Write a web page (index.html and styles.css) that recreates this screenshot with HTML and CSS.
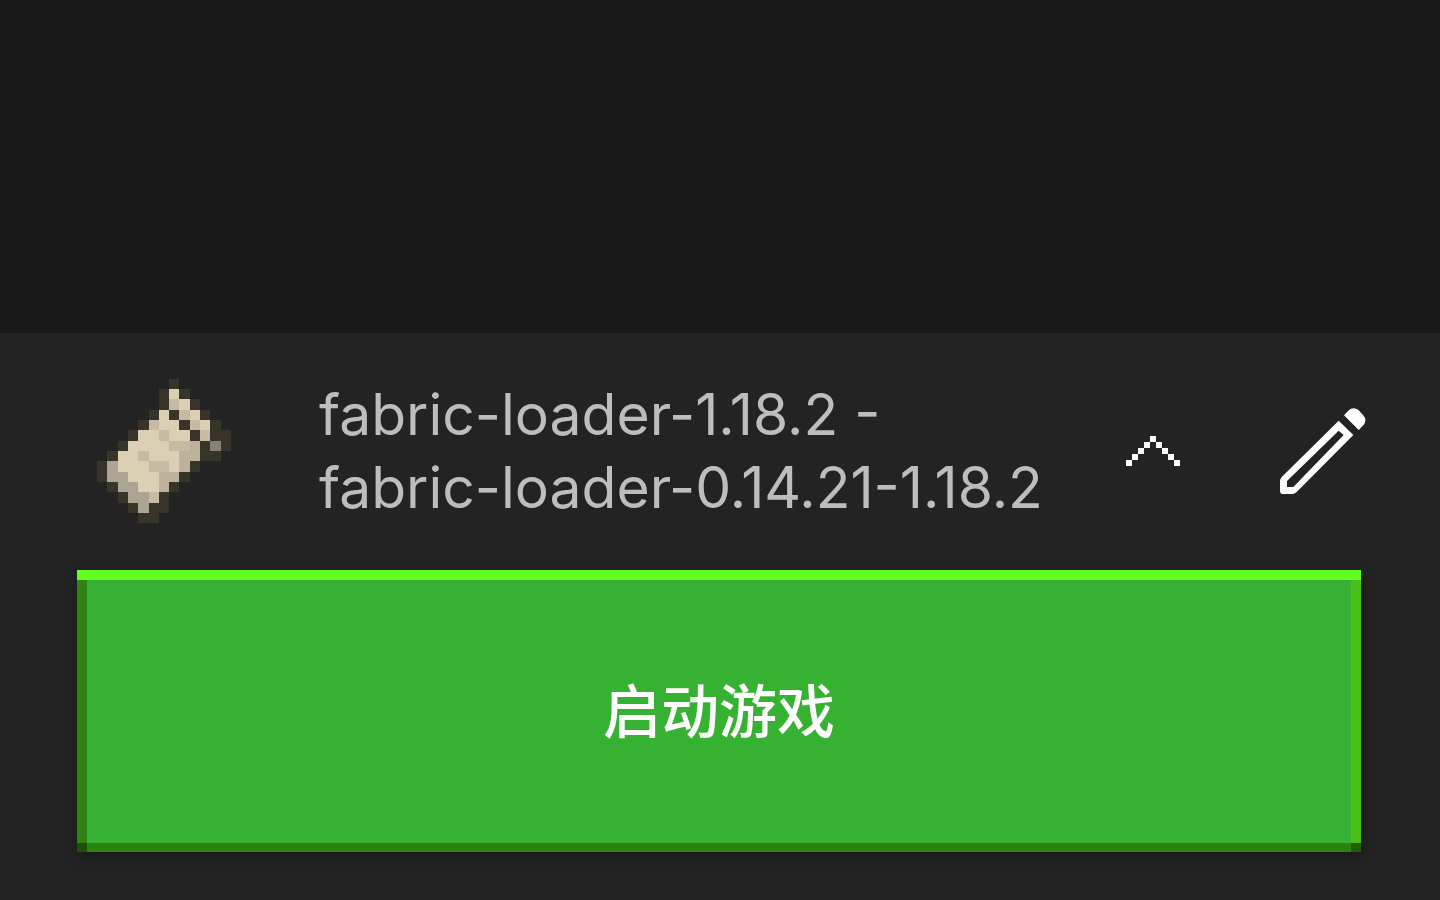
FILE: index.html
```html
<!DOCTYPE html>
<html lang="zh-CN">
<head>
    <meta charset="UTF-8">
    <meta name="viewport" content="width=device-width, initial-scale=1.0">
    <title>启动游戏</title>
    <link rel="stylesheet" href="styles.css">
</head>
<body>
    <main class="content"></main>

    <footer class="launch-panel">
        <div class="version-row">
            <!-- pixel icon, one unit per pixel -->
            <svg class="version-icon" viewBox="0 0 13 14" shape-rendering="crispEdges" aria-hidden="true">
                <path fill="#39342a" d="M7 0H8V1H9V2H10V3H11V4H12V5H13V7H12V8H10V9H9V10H8V11H7V13H6V14H4V13H3V12H2V11H1V10H0V8H1V7H2V6H3V5H4V4H5V3H6V1H7Z"/>
                <path fill="#dbd0b4" d="M7 1H8V2H9V3H10V4H11V6H10V8H9V9H8V10H7V11H6V12H5V13H4V12H3V11H2V10H1V8H2V7H3V6H4V5H5V4H6V3H7Z"/>
                <path fill="#39342a" d="M7 3h1v1h-1zM8 4h1v1h-1zM9 5h1v1h-1z"/>
                <path fill="#c6baa2" d="M7 2h1v1h-1zM8 3h1v1h-1zM5 4h1v1h-1zM9 4h1v1h-1zM6 5h1v1h-1zM10 5h1v1h-1zM7 6h2v1h-2zM4 7h1v1h-1zM5 8h2v1h-2zM5 11h1v1h-1z"/>
                <path fill="#bdb29c" d="M9 6h1v2h-2v-1h1zM8 8h1v1h-1zM6 9h2v1h-1v1h-1z"/>
                <path fill="#aca493" d="M1 8h1v1h1v1h1v1h1v2h-1v-1h-1v-1h-1v-1h-1z"/>
                <path fill="#89816f" d="M11 6h1v1h-1z"/>
            </svg>
            <p class="version-name">fabric-loader-1.18.2 -<br>fabric-loader-0.14.21-1.18.2</p>
            <button class="icon-btn" type="button" aria-label="选择版本">
                <svg class="arrow-icon" viewBox="0 0 9 5" shape-rendering="crispEdges">
                    <path fill="#fff" d="M4 0h1v1h-1zM3 1h1v1h-1zM5 1h1v1h-1zM2 2h1v1h-1zM6 2h1v1h-1zM1 3h1v1h-1zM7 3h1v1h-1zM0 4h1v1h-1zM8 4h1v1h-1z"/>
                </svg>
            </button>
            <button class="icon-btn" type="button" aria-label="编辑">
                <svg class="edit-icon" viewBox="0 0 258 258">
                    <path fill="#fff" fill-rule="evenodd" d="M176 38L220 81L50 252Q44 258 37 258H10Q0 258 0 248V219Q0 212 6 206ZM176 68L21 219V237H40L191 81Z"/>
                    <path fill="#fff" d="M192 22L205 8Q220 -6 236 7L249 21Q263 36 250 52L236 66Z"/>
                </svg>
            </button>
        </div>
        <button class="launch-btn" type="button">启动游戏</button>
    </footer>
</body>
</html>
```
FILE: styles.css
```css
*{
    margin: 0px;
    padding: 0px;
    box-sizing: border-box;
}
body{
    display: flex;
    flex-direction: column;
    min-height: 100vh;
    background-color: #191919;
    font-family: "Inter", "Noto Sans CJK SC", sans-serif;
}
.content{
    flex: 1;
}
.launch-panel{
    padding: 45px 79px 48px 77px;
    background-color: #232323;
}
.version-row{
    display: flex;
    align-items: center;
    padding-left: 20px;
    margin-bottom: 46px;
}
.version-icon{
    width: 134px;
    height: 146px;
    flex-shrink: 0;
}
.version-name{
    flex: 1;
    margin: 0px 48px 0px 88px;
    color: #bdbdbd;
    font-size: 57px;
    line-height: 73px;
    white-space: nowrap;
}
.icon-btn{
    display: flex;
    border: none;
    background: none;
    cursor: pointer;
}
.arrow-icon{
    width: 55px;
    height: 30px;
}
.edit-icon{
    width: 86px;
    height: 86px;
    margin: 0px -5px 0px 100px;
}
/* green button with bevel edges */
.launch-btn{
    display: block;
    width: 100%;
    padding: 93px 0px 99px;
    border: none;
    background:
        linear-gradient(#64ff22, #64ff22) top / 100% 10px no-repeat,
        linear-gradient(#1c510b, #1c510b) left bottom / 10px 9px no-repeat,
        linear-gradient(#235f0b, #235f0b) right bottom / 10px 9px no-repeat,
        linear-gradient(#2b820d, #2b820d) bottom / 100% 9px no-repeat,
        linear-gradient(#318215, #318215) left / 10px 100% no-repeat,
        linear-gradient(#4abf1a, #4abf1a) right / 10px 100% no-repeat,
        #37b131;
    box-shadow: 0px 4px 12px rgba(0, 0, 0, 0.3);
    color: #fff;
    font-family: "Noto Sans CJK SC", sans-serif;
    font-size: 58px;
    font-weight: 500;
    line-height: 90px;
    cursor: pointer;
}
```
